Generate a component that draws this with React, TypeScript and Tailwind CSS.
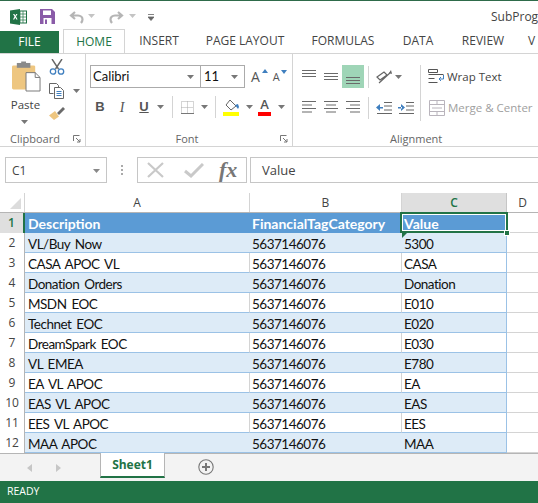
import React from "react";

const ui = "font-['Open_Sans','Noto_Sans',sans-serif]";
const cell = "font-['Lato','Liberation_Sans',sans-serif]";

const Caret = ({ c = "#777", className = "" }: { c?: string; className?: string }) => (
  <svg width="7" height="4" viewBox="0 0 7 4" className={className}><path d="M0 0h7L3.500 4z" fill={c} /></svg>
);

const Lines = ({ widths, x, top = 1, gap = 4, color = "#6a6a6a" }: { widths: number[]; x: number[]; top?: number; gap?: number; color?: string }) => (
  <svg width="16" height="16" viewBox="0 0 16 16">
    {widths.map((w, i) => (
      <rect key={i} x={x[i]} y={top + i * gap} width={w} height="1" fill={color} />
    ))}
  </svg>
);

const Launcher = () => (
  <svg width="8" height="8" viewBox="0 0 8 8">
    <path d="M0.500 6V0.500H6.500M3 3l4 4M7 4v3H4" stroke="#777" fill="none" strokeWidth="1" />
  </svg>
);

const VDiv = ({ h = "h-[22px]" }: { h?: string }) => <div className={`w-px bg-[#d4d4d4] ${h}`} />;

const rows: [string, string, string][] = [
  ["VL/Buy Now", "5637146076", "5300"],
  ["CASA APOC VL", "5637146076", "CASA"],
  ["Donation Orders", "5637146076", "Donation"],
  ["MSDN EOC", "5637146076", "E010"],
  ["Technet EOC", "5637146076", "E020"],
  ["DreamSpark EOC", "5637146076", "E030"],
  ["VL EMEA", "5637146076", "E780"],
  ["EA VL APOC", "5637146076", "EA"],
  ["EAS VL APOC", "5637146076", "EAS"],
  ["EES VL APOC", "5637146076", "EES"],
  ["MAA APOC", "5637146076", "MAA"],
];

function TitleBar() {
  return (
    <div className="h-[30px] flex items-center bg-white relative">
      <svg width="17" height="16" viewBox="0 0 17 16" className="ml-[10px] mt-[1px]">
        <rect x="7" y="2" width="9.500" height="12" fill="#fff" stroke="#217346" strokeWidth="1" />
        <path d="M10 2v12M13 2v12M7 5h10M7 8h10M7 11h10" stroke="#217346" strokeWidth="0.700" />
        <path d="M0 1.500L10 0v16L0 14.500z" fill="#217346" />
        <path d="M3 5l1.500 2.500L3 10.500h1.300l1-2 1 2h1.300L6 7.500 7.500 5H6.200l-.9 1.800L4.400 5z" fill="#fff" />
      </svg>
      <svg width="15" height="15" viewBox="0 0 15 15" className="ml-[13px] mt-[1px]">
        <path d="M0 0h12l3 3v12H0z" fill="#8a5ba8" />
        <rect x="3" y="1.500" width="8" height="4.500" fill="#fff" />
        <rect x="3.500" y="9" width="8" height="6" fill="#fff" />
        <rect x="5" y="10.500" width="2" height="4.500" fill="#8a5ba8" />
      </svg>
      <svg width="15" height="14" viewBox="0 0 15 14" className="ml-[14px] mt-[1px]">
        <path d="M6 2L2 5.500 6 9M2.500 5.500H9c3 0 4.500 2 4.500 4 0 1.500-.7 2.500-1.500 3.500" stroke="#b5b5b5" strokeWidth="2.200" fill="none" />
      </svg>
      <Caret c="#c4c4c4" className="ml-[4px]" />
      <svg width="15" height="14" viewBox="0 0 15 14" className="ml-[14px] mt-[1px]">
        <path d="M9 2l4 3.500L9 9M12.500 5.500H6c-3 0-4.500 2-4.500 4 0 1.500.7 2.500 1.500 3.500" stroke="#b5b5b5" strokeWidth="2.200" fill="none" />
      </svg>
      <Caret c="#c4c4c4" className="ml-[5px]" />
      <svg width="6" height="7" viewBox="0 0 6 7" className="ml-[12px] mt-[2px]">
        <path d="M0 .5h6M0 3h6L3 6.500z" stroke="#666" strokeWidth="0.800" fill="#666" />
      </svg>
      <span className={`${ui} absolute left-[491px] top-[7px] text-[12px] leading-[18px] text-[#444] whitespace-nowrap`}>SubProg</span>
    </div>
  );
}

function Tabs() {
  const tabs: [string, string][] = [
    ["INSERT", "w-[68px]"],
    ["PAGE LAYOUT", "w-[104px]"],
    ["FORMULAS", "w-[92px]"],
    ["DATA", "w-[58px]"],
    ["REVIEW", "w-[72px]"],
  ];
  return (
    <div className={`${ui} h-[25px] flex text-[12px] text-[#444] border-b border-[#d4d4d4] w-full overflow-hidden`}>
      <div className="w-[59px] h-[25px] bg-[#217346] text-white flex items-center justify-center shrink-0">FILE</div>
      <div className="ml-[4px] w-[62px] h-[25px] bg-white border border-b-0 border-[#d4d4d4] text-[#217346] flex items-center justify-center shrink-0 z-10">HOME</div>
      {tabs.map(([t, w]) => (
        <div key={t} className={`${w} flex items-center justify-center whitespace-nowrap shrink-0`}>{t}</div>
      ))}
      <div className="ml-[9px] flex items-center shrink-0">V</div>
    </div>
  );
}

function Clipboard() {
  return (
    <div className="w-[86px] h-[92px] shrink-0 flex flex-col border-r border-[#d4d4d4]">
      <div className="flex h-[78px]">
        <div className="w-[49px] flex flex-col items-center pt-[7px]">
          <svg width="29" height="31" viewBox="0 0 30 31" className="ml-[3px]">
            <rect x="0" y="4" width="24" height="25" rx="1.500" fill="#eec680" />
            <rect x="5" y="1.500" width="14" height="5" fill="#8a8a8a" />
            <rect x="9.500" y="0" width="5" height="3" fill="#8a8a8a" />
            <path d="M14.500 11.500H24l5 5v14H14.500z" fill="#fff" stroke="#777" strokeWidth="1" />
            <path d="M24 11.500v5h5" fill="none" stroke="#777" strokeWidth="1" />
          </svg>
          <span className={`${ui} text-[11.500px] leading-[16px] text-[#444] mt-[5px] ml-[2px]`}>Paste</span>
          <Caret c="#777" className="mt-[7px]" />
        </div>
        <div className="flex flex-col pt-[5px]">
          <svg width="16" height="16" viewBox="0 0 16 16">
            <path d="M3 0l6.500 10M13 0L6.500 10" stroke="#666" strokeWidth="1.400" />
            <circle cx="4" cy="12.500" r="2.700" fill="none" stroke="#3f7fbf" strokeWidth="1.300" />
            <circle cx="12" cy="12.500" r="2.700" fill="none" stroke="#3f7fbf" strokeWidth="1.300" />
          </svg>
          <div className="flex items-center mt-[8px]">
            <svg width="16" height="16" viewBox="0 0 16 16">
              <path d="M.5.500h7l2 2v2M.5.500v10h4" fill="none" stroke="#666" />
              <path d="M5.500 4.500h6l3 3v8h-9z" fill="#fff" stroke="#666" />
              <path d="M7.500 8.500h5M7.500 10.500h5M7.500 12.500h5" stroke="#3f7fbf" />
            </svg>
            <Caret className="ml-[8px]" />
          </div>
          <svg width="17" height="15" viewBox="0 0 17 15" className="mt-[7px]">
            <path d="M0 9.500L5 14l5-3.500-4-5.500z" fill="#eec680" />
            <path d="M8 7l6-6 2 2-6 6z" fill="#6a6a6a" />
          </svg>
        </div>
      </div>
      <div className="flex items-center h-[14px] pl-[10px] pr-[4px] justify-between">
        <span className={`${ui} text-[11px] leading-[14px] text-[#666]`}>Clipboard</span>
        <Launcher />
      </div>
    </div>
  );
}

function FontGroup() {
  return (
    <div className="w-[207px] h-[92px] shrink-0 flex flex-col border-r border-[#d4d4d4]">
      <div className="flex items-center mt-[11px] ml-[4px]">
        <div className={`${cell} w-[111px] h-[23px] border border-[#ababab] flex items-center justify-between pl-[2px] pr-[6px] text-[13px] text-[#111]`}>
          Calibri
          <Caret />
        </div>
        <div className={`${cell} w-[44px] h-[23px] border border-l-0 border-[#ababab] flex items-center justify-between pl-[3px] pr-[6px] text-[13px] text-[#111]`}>
          11
          <Caret />
        </div>
        <div className={`${ui} ml-[6px] relative text-[14px] leading-[16px] text-[#555]`}>
          A
          <svg width="6" height="4" viewBox="0 0 6 4" className="absolute left-[11px] top-[0px]"><path d="M0 4h6L3 0z" fill="#3f7fbf" /></svg>
        </div>
        <div className={`${ui} ml-[13px] relative text-[11px] leading-[16px] text-[#555]`}>
          A
          <svg width="6" height="4" viewBox="0 0 6 4" className="absolute left-[8px] top-[1px]"><path d="M0 0h6L3 4z" fill="#3f7fbf" /></svg>
        </div>
      </div>
      <div className="flex items-center h-[22px] mt-[8px] ml-[3px]">
        <span className="font-['Liberation_Sans',sans-serif] w-[22px] text-center text-[13px] font-bold text-[#555]">B</span>
        <span className="font-['Liberation_Serif',serif] w-[22px] text-center text-[14px] italic text-[#555]">I</span>
        <span className="font-['Liberation_Sans',sans-serif] w-[22px] text-center text-[13px] underline font-bold text-[#555]">U</span>
        <Caret className="ml-[2px]" />
        <div className="ml-[8px]"><VDiv /></div>
        <svg width="13" height="13" viewBox="0 0 13 13" className="ml-[8px]">
          <path d="M.5.500h12v12H.5zM6.500.500v12M.5 6.500h12" fill="none" stroke="#aaa" strokeDasharray="1 1" />
          <path d="M0 12.500h13" stroke="#777" />
        </svg>
        <Caret className="ml-[7px]" />
        <div className="ml-[7px]"><VDiv /></div>
        <svg width="17" height="17" viewBox="0 0 17 17" className="ml-[7px]">
          <path d="M7 1l6 6-5 4-5-5z" fill="#fff" stroke="#666" />
          <path d="M12 6l3-1 1 3-1 2z" fill="#3f7fbf" />
          <rect x="0" y="13" width="16" height="4" fill="#ffff00" />
        </svg>
        <Caret className="ml-[6px]" />
        <div className="ml-[5px] relative w-[13px] h-[20px] flex flex-col items-center">
          <span className={`${ui} text-[13px] leading-[15px] font-semibold text-[#555]`}>A</span>
          <div className="w-[13px] h-[4px] bg-[#ff0000]" />
        </div>
        <Caret className="ml-[7px]" />
      </div>
      <div className="flex items-center mt-[14px] h-[14px] pr-[4px]">
        <span className={`${ui} flex-1 text-center text-[11px] leading-[14px] text-[#666] ml-[8px]`}>Font</span>
        <Launcher />
      </div>
    </div>
  );
}

function Alignment() {
  const Btn = ({ children, on }: { children: React.ReactNode; on?: boolean }) => (
    <div className={`w-[22px] h-[23px] flex items-center justify-center ${on ? "bg-[#9fd5b7]" : ""}`}>{children}</div>
  );
  return (
    <div className="flex-1 h-[92px] flex flex-col overflow-hidden">
      <div className="flex items-center h-[23px] mt-[11px] ml-[5px]">
        <Btn><Lines widths={[14, 14, 14]} x={[1, 1, 1]} top={1} gap={3} /></Btn>
        <Btn><Lines widths={[14, 14, 14]} x={[1, 1, 1]} top={4} gap={3} /></Btn>
        <Btn on><Lines widths={[14, 14, 14]} x={[1, 1, 1]} top={8} gap={3} /></Btn>
        <div className="ml-[4px]"><VDiv /></div>
        <svg width="17" height="15" viewBox="0 0 17 15" className="ml-[7px]">
          <path d="M1 8l7-5 3 3-7 5zM3 14L15 3" stroke="#666" fill="none" strokeWidth="1.200" />
          <path d="M15 1l1 4-3-1z" fill="#666" />
        </svg>
        <Caret className="ml-[2px]" />
        <div className="ml-[18px]"><VDiv h="h-[56px] mt-[33px]" /></div>
        <svg width="17" height="15" viewBox="0 0 17 15" className="ml-[7px]">
          <path d="M.5.500h9v3h-9zM.5 5.500h15M.5 9.500h6M.5 13.500h9" stroke="#555" fill="none" />
          <path d="M15.500 6v4h-4M13 8l-2 2 2 2" stroke="#3f7fbf" fill="none" />
        </svg>
        <span className={`${ui} ml-[2px] text-[11.500px] text-[#444] whitespace-nowrap`}>Wrap Text</span>
      </div>
      <div className="flex items-center h-[23px] mt-[8px] ml-[5px]">
        <Btn><Lines widths={[14, 10, 14, 10]} x={[1, 1, 1, 1]} top={1} gap={3.500} /></Btn>
        <Btn><Lines widths={[14, 10, 14, 10]} x={[1, 3, 1, 3]} top={1} gap={3.500} /></Btn>
        <Btn><Lines widths={[14, 10, 14, 10]} x={[1, 5, 1, 5]} top={1} gap={3.500} /></Btn>
        <div className="ml-[4px]"><VDiv /></div>
        <svg width="16" height="12" viewBox="0 0 16 12" className="ml-[7px]">
          <path d="M8 .5h8M8 4h8M8 8h8M1 11.500h15" stroke="#666" />
          <path d="M0 5.500L4 2v7zM3 5h4v1.500H3z" fill="#3f7fbf" />
        </svg>
        <svg width="16" height="12" viewBox="0 0 16 12" className="ml-[6px]">
          <path d="M8 .5h8M8 4h8M8 8h8M1 11.500h15" stroke="#666" />
          <path d="M7 5.500L3 2v7zM0 5h4v1.500H0z" fill="#3f7fbf" />
        </svg>
        <svg width="16" height="16" viewBox="0 0 16 16" className="ml-[15px]">
          <path d="M.5.500h15v15H.5zM.5 4.500h15M.5 11.500h15M8 .5v4M8 11.500v4M3 8h10" stroke="#b9b4bc" fill="none" />
        </svg>
        <span className={`${ui} ml-[3px] text-[11.500px] text-[#a0a0a0] whitespace-nowrap`}>Merge &amp; Center</span>
      </div>
      <div className={`${ui} mt-[13px] h-[14px] leading-[14px] text-[11px] text-[#666] ml-[97px]`}>Alignment</div>
    </div>
  );
}

function Ribbon() {
  return (
    <div className="h-[93px] flex border-b border-[#d4d4d4]">
      <Clipboard />
      <FontGroup />
      <Alignment />
    </div>
  );
}

function FormulaBar() {
  return (
    <div className="h-[46px] flex pt-[10px] pl-[5px] shrink-0">
      <div className={`${ui} w-[102px] h-[26px] border border-[#c6c6c6] flex items-center justify-between pl-[6px] pr-[6px] pt-[2px] text-[12px] text-[#444]`}>
        C1
        <Caret c="#888" />
      </div>
      <div className="w-[30px] h-[26px] flex flex-col items-center justify-center gap-[2px]">
        <span className="w-[2px] h-[2px] bg-[#aaa]" />
        <span className="w-[2px] h-[2px] bg-[#aaa]" />
        <span className="w-[2px] h-[2px] bg-[#aaa]" />
      </div>
      <div className="w-[110px] h-[26px] border border-[#c6c6c6] flex items-center">
        <svg width="18" height="16" viewBox="0 0 18 16" className="ml-[9px]"><path d="M1 1l15 14M16 1L1 15" stroke="#c9c9c9" strokeWidth="2.200" /></svg>
        <svg width="20" height="15" viewBox="0 0 20 15" className="ml-[19px]"><path d="M1 8l6 5L19 1" stroke="#c9c9c9" strokeWidth="3" fill="none" /></svg>
        <span className="font-['Liberation_Serif',serif] italic font-bold text-[22px] leading-[22px] text-[#777] ml-[15px]">fx</span>
      </div>
      <div className={`${ui} ml-[3px] flex-1 h-[26px] border border-r-0 border-[#c6c6c6] flex items-center pl-[11px] pt-[2px] text-[13px] text-[#444]`}>Value</div>
    </div>
  );
}

function Grid() {
  const rowHead = "w-[25px] shrink-0 flex items-center justify-center border-r border-[#b5b5b5] text-[#444]";
  const hdr = "bg-[#5b9bd5] text-white font-bold text-[14px] leading-[22px]";
  const txt = "text-[13.500px] tracking-[-0.5px] [word-spacing:2px] leading-[22px] text-[#111] whitespace-nowrap";
  return (
    <div className={`${cell} flex-1 flex flex-col overflow-hidden relative bg-white`}>
      <div className={`${ui} h-[20px] flex text-[12px] text-[#444] border-b border-[#b5b5b5] shrink-0 bg-white`}>
        <div className="w-[25px] flex items-end justify-end border-r border-[#d4d4d4] pr-[3px] pb-[3px]">
          <svg width="11" height="11" viewBox="0 0 11 11"><path d="M11 0v11H0z" fill="#dcdcdc" /></svg>
        </div>
        <div className="w-[225px] flex items-center justify-center border-r border-[#d4d4d4]">A</div>
        <div className="w-[152px] flex items-center justify-center border-r border-[#d4d4d4]">B</div>
        <div className="w-[105px] flex items-center justify-center bg-[#dfdfdf] text-[#217346] font-semibold border-r border-[#c6c6c6]">C</div>
        <div className="flex-1 flex items-center justify-center">D</div>
      </div>
      <div className="h-[20px] flex shrink-0">
        <div className={`${ui} w-[25px] shrink-0 flex items-center justify-center bg-[#dfdfdf] text-[#217346] text-[12px] font-semibold border-r-2 border-[#217346]`}>1</div>
        <div className={`w-[225px] pl-[3px] ${hdr}`}>Description</div>
        <div className={`w-[152px] pl-[2px] ${hdr}`}>FinancialTagCategory</div>
        <div className={`w-[105px] pl-[2px] relative ${hdr}`}>
          Value
          <div className="absolute -left-[2px] -top-[1px] w-[108px] h-[21px] border-2 border-[#217346] z-10">
            <div className="w-full h-full border border-white" />
          </div>
          <div className="absolute -right-[3px] -bottom-[3px] w-[6px] h-[6px] bg-[#217346] border border-white z-20" />
        </div>
        <div className="flex-1 border-b border-[#d4d4d4]" />
      </div>
      {rows.map((r, i) => {
        const blue = i % 2 === 0;
        return (
          <div key={i} className="h-[20px] flex shrink-0">
            <div className={`${ui} ${rowHead} text-[12px]`}>{i + 2}</div>
            <div className={`w-[225px] pl-[3px] ${txt} border-b border-[#9bc2e6] ${blue ? "bg-[#ddebf7]" : "bg-white border-r border-r-[#d4d4d4]"}`}>{r[0]}</div>
            <div className={`w-[152px] pl-[2px] ${txt} border-b border-[#9bc2e6] ${blue ? "bg-[#ddebf7]" : "bg-white border-r border-r-[#d4d4d4]"}`}>{r[1]}</div>
            <div className={`w-[105px] pl-[2px] ${txt} border-b border-r border-[#9bc2e6] relative ${blue ? "bg-[#ddebf7]" : "bg-white"}`}>
              {r[2]}
              {i === 0 && (
                <svg width="5" height="5" viewBox="0 0 5 5" className="absolute left-0 top-0 z-30"><path d="M0 0h5L0 5z" fill="#217346" /></svg>
              )}
            </div>
            <div className="flex-1 border-b border-[#d4d4d4]" />
          </div>
        );
      })}
    </div>
  );
}

function SheetBar() {
  return (
    <div className="h-[28px] flex bg-[#f3f3f3] border-t border-[#b5b5b5] shrink-0 relative">
      <svg width="5" height="8" viewBox="0 0 5 8" className="ml-[27px] mt-[10px]"><path d="M5 0v8L0 4z" fill="#c6c6c6" /></svg>
      <svg width="5" height="8" viewBox="0 0 5 8" className="ml-[24px] mt-[10px]"><path d="M0 0v8l5-4z" fill="#c6c6c6" /></svg>
      <div className={`${ui} ml-[39px] -mt-px w-[65px] h-[25px] bg-white border border-t-0 border-[#b5b5b5] border-b-2 border-b-[#217346] text-[#217346] font-bold text-[12px] flex items-center justify-center`}>Sheet1</div>
      <svg width="16" height="16" viewBox="0 0 16 16" className="ml-[33px] mt-[5px]">
        <circle cx="8" cy="8" r="7.200" fill="none" stroke="#777" strokeWidth="1.100" />
        <path d="M8 4v8M4 8h8" stroke="#777" strokeWidth="2" />
      </svg>
    </div>
  );
}

export default function App() {
  return (
    <div className="w-[538px] h-[503px] flex flex-col overflow-hidden bg-white border-t border-[#2e6b4a]">
      <div className="h-[29px] shrink-0 -mt-px pt-px"><TitleBar /></div>
      <Tabs />
      <Ribbon />
      <FormulaBar />
      <Grid />
      <SheetBar />
      <div className={`${ui} h-[22px] shrink-0 bg-[#217346] text-white text-[10.500px] flex items-center pl-[7px]`}>READY</div>
    </div>
  );
}
